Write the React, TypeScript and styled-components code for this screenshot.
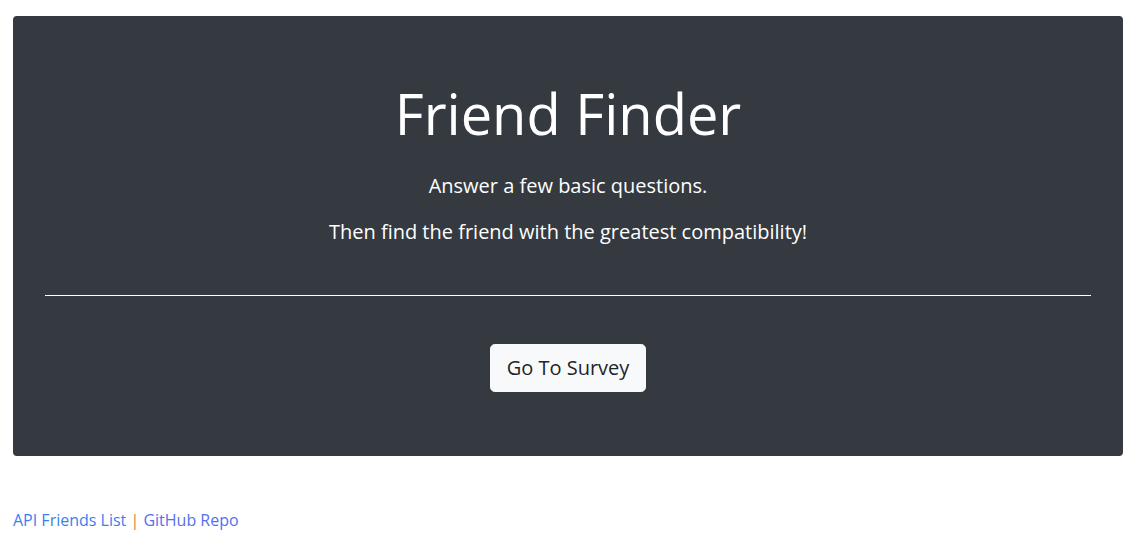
import React from "react";
import styled, { createGlobalStyle } from "styled-components";

const GlobalStyle = createGlobalStyle`
  html, body { margin: 0; padding: 0; background: #ffffff; }
  body {
    font-family: "Open Sans", "Noto Sans", sans-serif;
    font-size: 16px;
    line-height: 1.5;
    color: #212529;
  }
  * { box-sizing: border-box; }
`;

const Page = styled.div`
  padding: 16px 14px 0 13px;
`;

const Jumbotron = styled.section`
  background: #343a40;
  color: #ffffff;
  border-radius: 4px;
  padding: 64px 32px;
  display: flex;
  flex-direction: column;
  align-items: center;
  text-align: center;
`;

const Title = styled.h1`
  margin: 0 0 24px;
  font-size: 56px;
  font-weight: 400;
  line-height: 1.2;
`;

const Lead = styled.p`
  margin: 0 0 16px;
  font-size: 20px;
  font-weight: 400;
  line-height: 30px;
`;

const Divider = styled.hr`
  align-self: stretch;
  margin: 32px 0 48px;
  border: 0;
  border-top: 1px solid #ffffff;
`;

const Button = styled.a`
  display: inline-block;
  background: #f8f9fa;
  color: #212529;
  border: 1px solid #f8f9fa;
  border-radius: 4.8px;
  padding: 8px 16px;
  font-size: 20px;
  line-height: 30px;
  text-decoration: none;
  cursor: pointer;
`;

const Footer = styled.footer`
  margin-top: 52px;
  font-size: 16px;
  line-height: 24px;
`;

const Link = styled.a<{ $tone: string }>`
  color: ${(p) => p.$tone};
  text-decoration: none;
`;

const Sep = styled.span`
  color: #cf7f2e;
`;

export default function App() {
  return (
    <>
      <GlobalStyle />
      <Page>
        <Jumbotron>
          <Title>Friend Finder</Title>
          <Lead>Answer a few basic questions.</Lead>
          <Lead>Then find the friend with the greatest compatibility!</Lead>
          <Divider />
          <Button href="#survey">Go To Survey</Button>
        </Jumbotron>
        <Footer>
          <Link $tone="#3b7ff0" href="#api">API Friends List</Link> <Sep>|</Sep>{" "}
          <Link $tone="#5470f0" href="#repo">GitHub Repo</Link>
        </Footer>
      </Page>
    </>
  );
}
